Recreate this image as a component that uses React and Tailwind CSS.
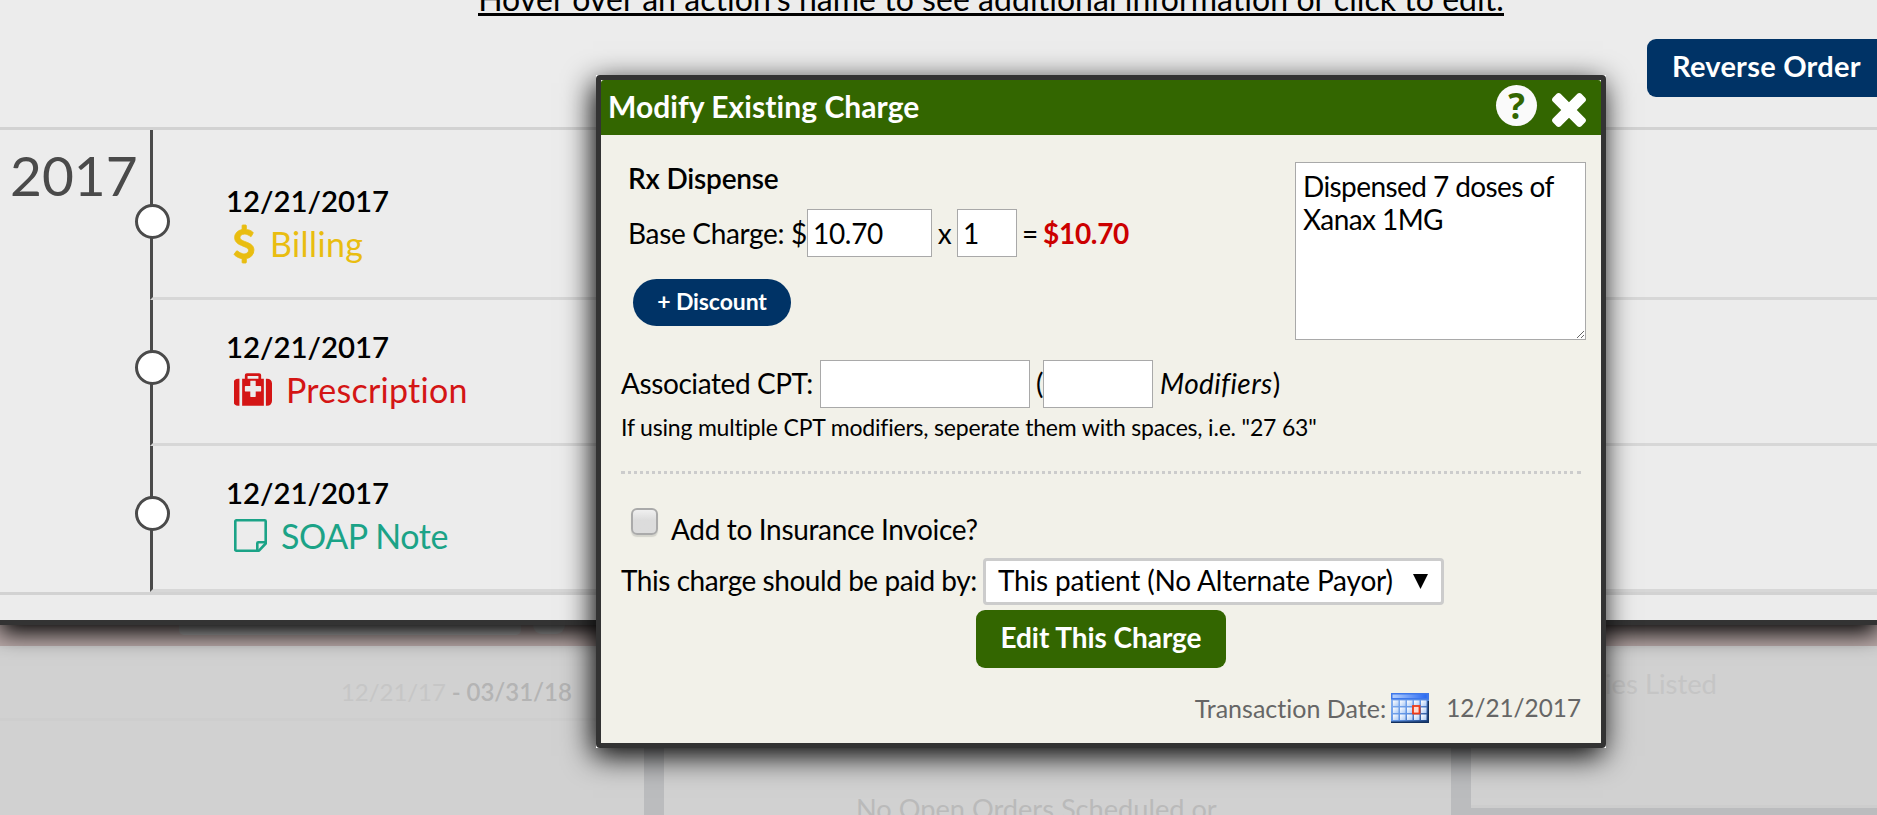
import React from 'react';

const MED_PATH =
  'M1280 960v-192q0-14-9-23t-23-9h-224v-224q0-14-9-23t-23-9h-192q-14 0-23 9t-9 23v224h-224q-14 0-23 9t-9 23v192q0 14 9 23t23 9h224v224q0 14 9 23t23 9h192q14 0 23-9t9-23v-224h224q14 0 23-9t9-23zm-640-576h512v-128h-512v128zm-384 0v1280h-64q-92 0-158-66t-66-158v-832q0-92 66-158t158-66h64zm1152 0v1280h-1024v-1280h128v-160q0-40 28-68t68-28h576q40 0 68 28t28 68v160h128zm384 224v832q0 92-66 158t-158 66h-64v-1280h64q92 0 158 66t66 158z';
const DOLLAR_PATH =
  'M1362 1185q0 153-99.500 263.500t-258.500 136.500v175q0 14-9 23t-23 9h-135q-13 0-22.500-9.500t-9.500-22.500v-175q-66-9-127.500-31t-101.500-44.500-74-48-46.500-37.500-17.500-18q-17-21-2-41l103-135q7-10 23-12 15-2 24 9l2 2q113 99 243 125 37 8 74 8 81 0 142.500-43t61.500-122q0-28-15-53t-33.500-42-58.500-37.500-66-32-80-32.500q-39-16-61.500-25t-61.500-26.500-62.500-31-56.500-35.500-53.500-42.500-43.500-49-35.500-58-21-66.500-8.500-78q0-138 98-242t255-134v-180q0-13 9.500-22.500t22.500-9.500h135q14 0 23 9t9 23v176q57 6 110.500 23t87 33.500 63.500 37.500 39 29 15 14q17 18 5 38l-81 146q-8 15-23 16-14 3-27-7-3-3-14.500-12t-39-26.500-58.500-32-74.500-26-85.500-11.500q-95 0-155 43t-60 111q0 26 8.500 48t29.500 41.500 39.500 33 56 31 60.500 27 70 27.500q53 20 81 31.500t76 35 75.500 42.500 62 50 53 63.500 31.500 76.500 13 94z';
const TIMES_PATH =
  'M1490 1322q0 40-28 68l-136 136q-28 28-68 28t-68-28l-294-294-294 294q-28 28-68 28t-68-28l-136-136q-28-28-28-68t28-68l294-294-294-294q-28-28-28-68t28-68l136-136q28-28 68-28t68 28l294 294 294-294q28-28 68-28t68 28l136 136q28 28 28 68t-28 68l-294 294 294 294q28 28 28 68z';

function DollarIcon() {
  return (
    <svg viewBox="424 0 940 1792" className="h-[38px] w-5 overflow-visible" fill="currentColor" stroke="currentColor" strokeWidth="40">
      <path d={DOLLAR_PATH} />
    </svg>
  );
}

function MedkitIcon() {
  return (
    <svg viewBox="0 128 1792 1536" className="h-[33px] w-[38px]" fill="currentColor">
      <path d={MED_PATH} />
    </svg>
  );
}

function NoteIcon() {
  return (
    <svg viewBox="0 0 33 33" className="size-[33px]" fill="none" stroke="currentColor" strokeWidth="2.600" strokeLinejoin="round">
      <path d="M2.300 1.300h28.400a1 1 0 0 1 1 1V24.500L25 31.700H2.300a1 1 0 0 1-1-1V2.300a1 1 0 0 1 1-1z" />
      <path d="M31.500 23.300H24.300a1 1 0 0 0-1 1V31.500" />
    </svg>
  );
}

function CalendarIcon() {
  return (
    <svg viewBox="0 0 38 30" className="h-[30px] w-[38px]">
      <defs>
        <linearGradient id="calHead" x1="0" x2="1">
          <stop offset="0" stopColor="#b4d0ff" />
          <stop offset="1" stopColor="#2a6af2" />
        </linearGradient>
        <linearGradient id="calGrid" x1="0" y1="0" x2="1" y2="1">
          <stop offset="0" stopColor="#8fb6f2" />
          <stop offset="0.550" stopColor="#5f93e4" />
          <stop offset="1" stopColor="#153a78" />
        </linearGradient>
        <linearGradient id="calCell" x1="0" y1="0" x2="1" y2="1">
          <stop offset="0" stopColor="#ffffff" />
          <stop offset="1" stopColor="#a9c8f5" />
        </linearGradient>
      </defs>
      <rect width="38" height="30" fill="url(#calGrid)" />
      <rect width="38" height="6.500" fill="#3f78ea" />
      <rect x="1.500" y="1.500" width="34" height="3.500" fill="url(#calHead)" />
      {[7.5, 14.5, 21.5].map((y) =>
        [2, 9, 16, 23, 30].map((x) => <rect key={`${x}-${y}`} x={x} y={y} width="5.500" height="5.500" fill="url(#calCell)" />),
      )}
      <rect x="22" y="13" width="6.500" height="7.500" fill="#ffd9cf" stroke="#ee3a16" strokeWidth="1.800" />
      <path d="M0 29.200H38M37.300 8V30" stroke="#12305e" strokeWidth="1.400" />
    </svg>
  );
}

const events = [
  { date: '12/21/2017', label: 'Billing', Icon: DollarIcon, color: 'text-[#e9bd10] tracking-[0.4px] gap-4', height: 'h-[170px]' },
  { date: '12/21/2017', label: 'Prescription', Icon: MedkitIcon, color: 'text-[#d41515] tracking-[0.25px] gap-[14px]', height: 'h-[146px]' },
  { date: '12/21/2017', label: 'SOAP Note', Icon: NoteIcon, color: 'text-[#1ba387] tracking-[-0.4px] gap-[14px]', height: 'h-[146px]' },
];

function TimelineWindow() {
  return (
    <section className="relative z-10 h-[625px] shrink-0 border-b-[5px] border-[#333] bg-[#ececec] shadow-[0_8px_22px_#000]">
      <div className="flex h-[39px] justify-center pl-[105px]">
        <p className="-mt-[21px] h-[37px] border-b-[3px] border-black text-[32px] leading-[40px] tracking-[0.04px] whitespace-nowrap text-black">
          Hover over an action's name to see additional information or click to edit.
        </p>
      </div>
      <div className="flex h-[88px] justify-end">
        <button className="flex h-[58px] w-[230px] rounded-l-[9px] bg-[#003366] pl-[25px] text-left text-[29px] leading-[54px] font-bold tracking-[0.25px] text-white">
          Reverse Order
        </button>
      </div>
      <div className="flex border-y-[3px] border-[#d2d2d2]">
        <h2 className="w-[150px] pt-[12px] pl-[10px] text-[55px] leading-[66px] text-[#4a4a4a]">2017</h2>
        <ul className="flex-1">
          {events.map(({ date, label, Icon, color, height }) => (
            <li key={label} className={`flex flex-col justify-end border-b-[3px] border-l-[3px] border-b-[#d7d7d7] border-l-[#4a4a4a] pb-8 ${height}`}>
              <div className="flex h-[86px] items-center">
                <span className="mb-[2px] -ml-[18px] size-[35px] rounded-full border-[3px] border-[#4a4a4a] bg-white" />
                <div className="ml-14">
                  <div className="h-[43px] text-[29.4px] leading-[43px] font-semibold tracking-[-0.05px] text-black">{date}</div>
                  <div className={`flex h-[43px] items-center pl-2 text-[34px] leading-[43px] ${color}`}>
                    <Icon />
                    <span>{label}</span>
                  </div>
                </div>
              </div>
            </li>
          ))}
        </ul>
      </div>
    </section>
  );
}

function Dashboard() {
  return (
    <section className="flex h-[190px] flex-col bg-[#bbbcbe]">
      <div className="flex h-[21px] shrink-0 items-start bg-[#b9a9a8]">
        <span className="ml-[179px] h-[10px] w-[342px] rounded-b-[5px] bg-[#b8b8b8]" />
        <span className="ml-[12px] h-[9px] w-[32px] rounded-b-full bg-[#b8b8b8]" />
      </div>
      <div className="flex flex-1 gap-5">
        <div className="w-[644px] bg-[#d1d1d1]">
          <div className="h-[75px] border-b-[3px] border-[#cecece] pt-[30px] pl-[341px] text-[24px] leading-[32px] tracking-[-0.05px] text-[#b4b4b4]">
            <span className="text-[#c6c6c6]">12/21/17</span>
            <span className="font-semibold"> - 03/31/18</span>
          </div>
        </div>
        <div className="w-[787px] bg-[#d1d1d1] pt-[145px] pl-[192px]">
          <p className="text-[27.2px] leading-[36px] whitespace-nowrap text-[#bababa]">No Open Orders Scheduled or</p>
        </div>
        <div className="h-[162px] flex-1 border-b-[3px] border-[#cdcdcd] bg-[#d1d1d1] pt-[22px] pl-[134px]">
          <p className="text-[27.4px] leading-[32px] text-[#c5c5c5]">ies Listed</p>
        </div>
      </div>
    </section>
  );
}

function ChargeDialog() {
  return (
    <div className="absolute top-[75px] left-[596px] z-20 h-[673px] w-[1010px] bg-white shadow-[-3px_8px_28px_#000]">
      <div className="flex h-full flex-col rounded-[4px] border-[5px] border-[#333] text-[28px] tracking-[-0.32px] text-black">
        <header className="flex h-[55px] shrink-0 items-start rounded-t-[3px] bg-[#336600] pr-[15px] pl-[7px] text-white">
          <h1 className="flex-1 text-[30px] leading-[52px] font-bold tracking-[0.06px]">Modify Existing Charge</h1>
          <span className="mt-[5px] mr-[15px] flex size-[41px] items-center justify-center rounded-full bg-[#fafafa] font-['Open_Sans'] text-[35px] leading-none font-bold text-[#336600]">
            ?
          </span>
          <svg viewBox="302 366 1188 1188" className="mt-[13px] size-[34px]" fill="currentColor">
            <path d={TIMES_PATH} />
          </svg>
        </header>
        <div className="flex flex-1 flex-col bg-[#f2f1e9] pr-[15px] pl-5">
          <div className="flex h-[225px] justify-between">
            <div className="pt-[23px] pl-[7px]">
              <h2 className="h-10 leading-10 font-semibold tracking-[-0.2px]">Rx Dispense</h2>
              <div className="mt-[11px] flex h-12 items-center leading-[48px]">
                <label className="w-[179px] whitespace-nowrap">Base Charge: $</label>
                <input className="h-12 w-[125px] border border-[#a9a9a9] bg-white pl-[5px]" defaultValue="10.70" />
                <span className="w-[25px] text-center">x</span>
                <input className="h-12 w-[60px] border border-[#a9a9a9] bg-white pl-[5px]" defaultValue="1" />
                <span className="w-[26px] pl-[5px]">=</span>
                <span className="font-bold tracking-[-0.3px] text-[#cc0000]">$10.70</span>
              </div>
              <button className="mt-[22px] ml-[5px] block h-[47px] w-[158px] rounded-full bg-[#003366] text-[23px] font-bold tracking-[-0.1px] text-white">
                <span className="block pb-[2px] leading-[45px]">+ Discount</span>
              </button>
            </div>
            <textarea
              className="mt-[27px] h-[178px] w-[291px] resize border border-[#a9a9a9] bg-white pt-[7px] pl-[7px] leading-[33.3px] tracking-[-0.58px]"
              defaultValue="Dispensed 7 doses of Xanax 1MG"
            />
          </div>
          <div className="flex h-12 items-center leading-[46px]">
            <label className="w-[199px] pb-[2px] tracking-[-0.42px] whitespace-nowrap">Associated CPT:</label>
            <input className="h-12 w-[210px] border border-[#a9a9a9] bg-white" />
            <span className="w-[13px] pb-[2px] pl-[6px]">(</span>
            <input className="h-12 w-[110px] border border-[#a9a9a9] bg-white" />
            <span className="pb-[2px] pl-[7px] tracking-[0.4px]">
              <em>Modifiers</em>)
            </span>
          </div>
          <p className="mt-1 h-[30px] text-[23px] leading-[30px] tracking-[-0.19px] whitespace-nowrap">
            If using multiple CPT modifiers, seperate them with spaces, i.e. "27 63"
          </p>
          <div className="mt-[29px] mr-[5px] border-t-[3px] border-dotted border-[#ccc]" />
          <div className="flex h-[84px] pt-[34px] pl-[10px]">
            <span className="size-[27px] rounded-[6px] border-2 border-[#aaa] bg-linear-to-b from-[#f0f0f0] to-[#dcdcdc] to-45% shadow-[0_2px_1px_#d4d4cc]" />
            <label className="ml-[13px] pt-[6px] leading-[30px] tracking-[-0.34px]">Add to Insurance Invoice?</label>
          </div>
          <div className="flex h-[47px] items-center leading-[45px]">
            <label className="w-[362px] pb-[2px] tracking-[-0.45px] whitespace-nowrap">This charge should be paid by:</label>
            <button className="flex h-[47px] w-[461px] items-center justify-between rounded-[4px] border-[3px] border-[#ccc] bg-white pr-[13px] pl-[12px] tracking-[-0.18px]">
              <span className="pb-[2px] leading-[39px] whitespace-nowrap">This patient (No Alternate Payor)</span>
              <svg viewBox="0 0 15 15" className="size-[15px]">
                <path d="M0 0H15L7.500 15z" />
              </svg>
            </button>
          </div>
          <button className="mt-[5px] ml-[355px] h-[58px] w-[250px] rounded-[9px] bg-[#336600] font-bold tracking-[-0.05px] text-white">
            <span className="block pb-[3px] leading-[55px]">Edit This Charge</span>
          </button>
          <div className="mt-[25px] mr-[5px] flex h-[30px] items-center justify-end text-[25px] leading-[30px] tracking-[0.01px] text-[#666]">
            <span>Transaction Date:</span>
            <span className="ml-[5px]">
              <CalendarIcon />
            </span>
            <span className="ml-[17px] text-[24.3px]">12/21/2017</span>
          </div>
        </div>
      </div>
    </div>
  );
}

export default function App() {
  return (
    <main className="relative flex h-[815px] w-full flex-col overflow-hidden font-['Lato',sans-serif]">
      <TimelineWindow />
      <Dashboard />
      <ChargeDialog />
    </main>
  );
}
